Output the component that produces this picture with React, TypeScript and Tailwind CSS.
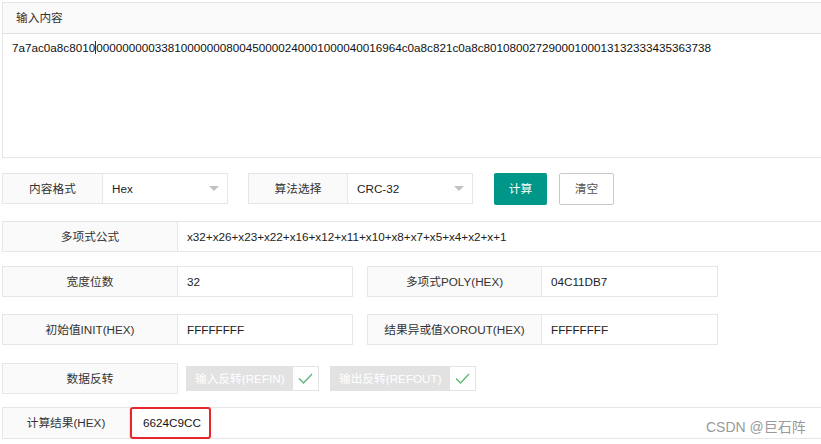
import React from 'react';

const HEX_INPUT =
  '7a7ac0a8c801000000000033810000000800450000240001000040016964c0a8c821c0a8c80108002729000100013132333435363738';

const font = { fontFamily: '"Liberation Sans", "Noto Sans CJK SC", sans-serif' };

function Label({ text, className }: { text: string; className: string }) {
  return (
    <div
      className={`flex h-full shrink-0 items-center justify-center border border-[#e6e6e6] bg-[#fafafa] text-[#333] ${className}`}
    >
      {text}
    </div>
  );
}

function Value({ text, className }: { text: string; className: string }) {
  return (
    <div
      className={`flex h-full shrink-0 items-center border border-l-0 border-[#e6e6e6] bg-white pl-[9px] text-[#222] ${className}`}
    >
      {text}
    </div>
  );
}

function Select({ value }: { value: string }) {
  return (
    <div className="flex h-full w-[125px] shrink-0 items-center justify-between border border-l-0 border-[#e6e6e6] bg-white pl-[9px] pr-[8px] text-[#222]">
      <span>{value}</span>
      <svg width="10" height="5" viewBox="0 0 10 5">
        <polygon points="0,0 10,0 5,5" fill="#c2c2c2" />
      </svg>
    </div>
  );
}

function Check() {
  return (
    <svg width="15" height="11" viewBox="0 0 15 11" fill="none">
      <path d="M1 5.5 L5.5 10 L14 1" stroke="#5fb878" strokeWidth="1.4" />
    </svg>
  );
}

function CheckBox({ text, width }: { text: string; width: string }) {
  return (
    <div className="flex h-[25px] shrink-0 items-stretch border border-[#e2e2e2] bg-white">
      <div className={`flex items-center bg-[#e2e2e2] pl-[8px] text-white ${width}`}>{text}</div>
      <div className="flex w-[25px] items-center justify-center bg-white">
        <Check />
      </div>
    </div>
  );
}

export default function App() {
  return (
    <div className="h-[444px] w-[821px] overflow-hidden bg-white text-[11.7px]" style={font}>
      <div className="relative w-[840px] pl-[2px] pt-[2px]">
        {/* input panel */}
        <div className="border border-[#e6e6e6]">
          <div className="flex h-[31px] items-center border-b border-[#e2e2e2] bg-[#fafafa] pl-[13px] text-[#333]">
            输入内容
          </div>
          <div className="h-[123px] pl-[9px] pt-[5px] leading-[16px] text-[#111]">
            {HEX_INPUT.slice(0, 13)}
            <span className="inline-block h-[13px] w-px translate-y-[2px] bg-[#333]" />
            {HEX_INPUT.slice(13)}
          </div>
        </div>

        {/* format / algorithm */}
        <div className="mt-[15px] flex h-[31px] items-center">
          <Label text="内容格式" className="w-[101px]" />
          <Select value="Hex" />
          <Label text="算法选择" className="ml-[20px] w-[100px]" />
          <Select value="CRC-32" />
          <button className="ml-[21px] h-[32px] w-[53px] rounded-[2px] bg-[#009688] text-white">计算</button>
          <button className="ml-[12px] h-[32px] w-[55px] rounded-[2px] border border-[#c9c9c9] bg-white text-[#555]">
            清空
          </button>
        </div>

        <div className="mt-[17px] flex h-[31px] items-center">
          <Label text="多项式公式" className="w-[176px]" />
          <Value text="x32+x26+x23+x22+x16+x12+x11+x10+x8+x7+x5+x4+x2+x+1" className="flex-1" />
        </div>

        <div className="mt-[14px] flex h-[31px] items-center">
          <Label text="宽度位数" className="w-[176px]" />
          <Value text="32" className="w-[175px]" />
          <Label text="多项式POLY(HEX)" className="ml-[14px] w-[175px]" />
          <Value text="04C11DB7" className="w-[176px]" />
        </div>

        <div className="mt-[17px] flex h-[31px] items-center">
          <Label text="初始值INIT(HEX)" className="w-[176px]" />
          <Value text="FFFFFFFF" className="w-[175px]" />
          <Label text="结果异或值XOROUT(HEX)" className="ml-[14px] w-[175px]" />
          <Value text="FFFFFFFF" className="w-[176px]" />
        </div>

        <div className="mt-[18px] flex h-[31px] items-center">
          <Label text="数据反转" className="w-[176px]" />
          <div className="ml-[8px]">
            <CheckBox text="输入反转(REFIN)" width="w-[106px]" />
          </div>
          <div className="ml-[11px]">
            <CheckBox text="输出反转(REFOUT)" width="w-[119px]" />
          </div>
        </div>

        <div className="mt-[13px] flex h-[32px] items-center">
          <Label text="计算结果(HEX)" className="w-[128px]" />
          <div className="flex h-full flex-1 items-center border border-l-0 border-[#e6e6e6] bg-white">
            <div className="flex h-[32px] w-[81px] items-center rounded-[3px] border-2 border-[#e8262b] pl-[11px] text-[#111]">
              6624C9CC
            </div>
          </div>
        </div>

        <div className="absolute left-[706px] top-[417px] text-[14px] text-[#9a9a9a]">CSDN @巨石阵</div>
      </div>
    </div>
  );
}
